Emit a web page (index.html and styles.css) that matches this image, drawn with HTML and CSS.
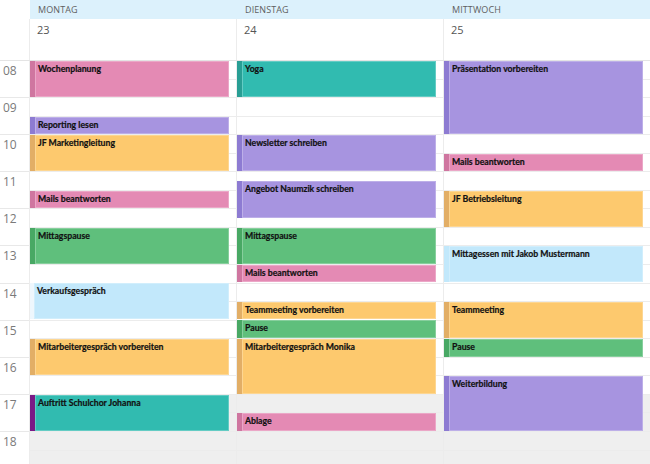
FILE: index.html
```html
<!DOCTYPE html>
<html lang="de">
<head>
<meta charset="utf-8">
<title>Kalender</title>
<link rel="stylesheet" href="styles.css">
</head>
<body>
<div class="cal">
  <div class="row head">
    <div class="corner"></div>
    <div class="dayname">MONTAG</div>
    <div class="dayname">DIENSTAG</div>
    <div class="dayname">MITTWOCH</div>
  </div>
  <div class="row dates">
    <div class="corner"></div>
    <div class="date">23</div>
    <div class="date">24</div>
    <div class="date">25</div>
  </div>
  <div class="row body">
    <div class="gutter">
      <div class="hour">08</div>
      <div class="hour">09</div>
      <div class="hour">10</div>
      <div class="hour">11</div>
      <div class="hour">12</div>
      <div class="hour">13</div>
      <div class="hour">14</div>
      <div class="hour">15</div>
      <div class="hour">16</div>
      <div class="hour">17</div>
      <div class="hour">18</div>
    </div>
    <div class="day">
      <div class="ev pink" style="grid-row: 1 / 5">Wochenplanung</div>
      <div class="ev purple" style="grid-row: 7 / 9">Reporting lesen</div>
      <div class="ev orange" style="grid-row: 9 / 13">JF Marketingleitung</div>
      <div class="ev pink" style="grid-row: 15 / 17">Mails beantworten</div>
      <div class="ev green" style="grid-row: 19 / 23">Mittagspause</div>
      <div class="ev light tentative" style="grid-row: 25 / 29">Verkaufsgespräch</div>
      <div class="ev orange" style="grid-row: 31 / 35">Mitarbeitergespräch vorbereiten</div>
      <div class="ev teal private" style="grid-row: 37 / 41">Auftritt Schulchor Johanna</div>
    </div>
    <div class="day">
      <div class="ev teal" style="grid-row: 1 / 5">Yoga</div>
      <div class="ev purple" style="grid-row: 9 / 13">Newsletter schreiben</div>
      <div class="ev purple" style="grid-row: 14 / 18">Angebot Naumzik schreiben</div>
      <div class="ev green" style="grid-row: 19 / 23">Mittagspause</div>
      <div class="ev pink" style="grid-row: 23 / 25">Mails beantworten</div>
      <div class="ev orange" style="grid-row: 27 / 29">Teammeeting vorbereiten</div>
      <div class="ev green" style="grid-row: 29 / 31">Pause</div>
      <div class="ev orange" style="grid-row: 31 / 37">Mitarbeitergespräch Monika</div>
      <div class="ev pink" style="grid-row: 39 / 41">Ablage</div>
    </div>
    <div class="day">
      <div class="ev purple" style="grid-row: 1 / 9">Präsentation vorbereiten</div>
      <div class="ev pink" style="grid-row: 11 / 13">Mails beantworten</div>
      <div class="ev orange" style="grid-row: 15 / 19">JF Betriebsleitung</div>
      <div class="ev light" style="grid-row: 21 / 25">Mittagessen mit Jakob Mustermann</div>
      <div class="ev orange" style="grid-row: 27 / 31">Teammeeting</div>
      <div class="ev green" style="grid-row: 31 / 33">Pause</div>
      <div class="ev purple" style="grid-row: 35 / 41">Weiterbildung</div>
    </div>
  </div>
</div>
</body>
</html>
```

FILE: styles.css
```css
* { box-sizing: border-box; }

html, body {
  margin: 0;
  padding: 0;
  background: #ffffff;
}

body {
  width: 650px;
  height: 464px;
  overflow: hidden;
  font-family: "Open Sans", "Noto Sans", sans-serif;
  color: #1a1a1a;
}

.cal {
  display: flex;
  flex-direction: column;
  width: 650px;
  height: 464px;
}

.row {
  display: grid;
  grid-template-columns: 29px repeat(3, 1fr);
}

.head {
  height: 19px;
  background: #dcf1fc;
}

.head .corner {
  background: #ffffff;
  margin-right: -1px;
}

.dayname {
  font-size: 9px;
  line-height: 19px;
  color: #5f5f5f;
  padding-left: 9px;
  letter-spacing: 0.1px;
}

.dates {
  height: 42px;
  border-bottom: 1px solid #e4e4e4;
}

.date {
  border-left: 1px solid #ececec;
  font-size: 11px;
  line-height: 14px;
  padding: 4px 0 0 7px;
  color: #555555;
}

.body {
  flex: 1;
  min-height: 0;
  overflow: hidden;
}

.gutter {
  background: repeating-linear-gradient(to bottom, transparent 0 36.1px, #e8e8e8 36.1px 37.1px);
}

.hour {
  height: 37.1px;
  font-size: 12px;
  line-height: 14px;
  padding: 3px 0 0 3px;
  color: #7a7a7a;
}

.day {
  border-left: 1px solid #ececec;
  display: grid;
  grid-template-rows: repeat(44, 9.275px);
  grid-template-columns: 1fr;
  padding-right: 7px;
  background:
    repeating-linear-gradient(to bottom, transparent 0 17.55px, #ececec 17.55px 18.55px),
    linear-gradient(to bottom, #ffffff 0 333.9px, #efefef 333.9px);
}

.ev {
  grid-column: 1;
  margin-bottom: 1px;
  min-height: 0;
  overflow: hidden;
  border-left: 5px solid;
  padding: 2px 0 0 3px;
  font-family: "Lato", "Open Sans", sans-serif;
  font-size: 8.7px;
  line-height: 11px;
  font-weight: 700;
  -webkit-text-stroke: 0.2px #111111;
  color: #111111;
  white-space: nowrap;
  box-shadow: inset 0 0 0 1px rgba(255, 255, 255, 0.25);
}

.pink { background: #e48ab4; border-left-color: #cf76a0; }
.purple { background: #a794e0; border-left-color: #8d7bd2; }
.orange { background: #fdc96e; border-left-color: #e2ae66; }
.green { background: #5fbf7c; border-left-color: #48a864; }
.teal { background: #31bbb0; border-left-color: #289e94; }
.light { background: #c2e8fb; border-left-color: #c2e8fb; }

.tentative {
  border-left: 4px solid #eef7fd;
}

.private { border-left-color: #7a1a86; }
```
